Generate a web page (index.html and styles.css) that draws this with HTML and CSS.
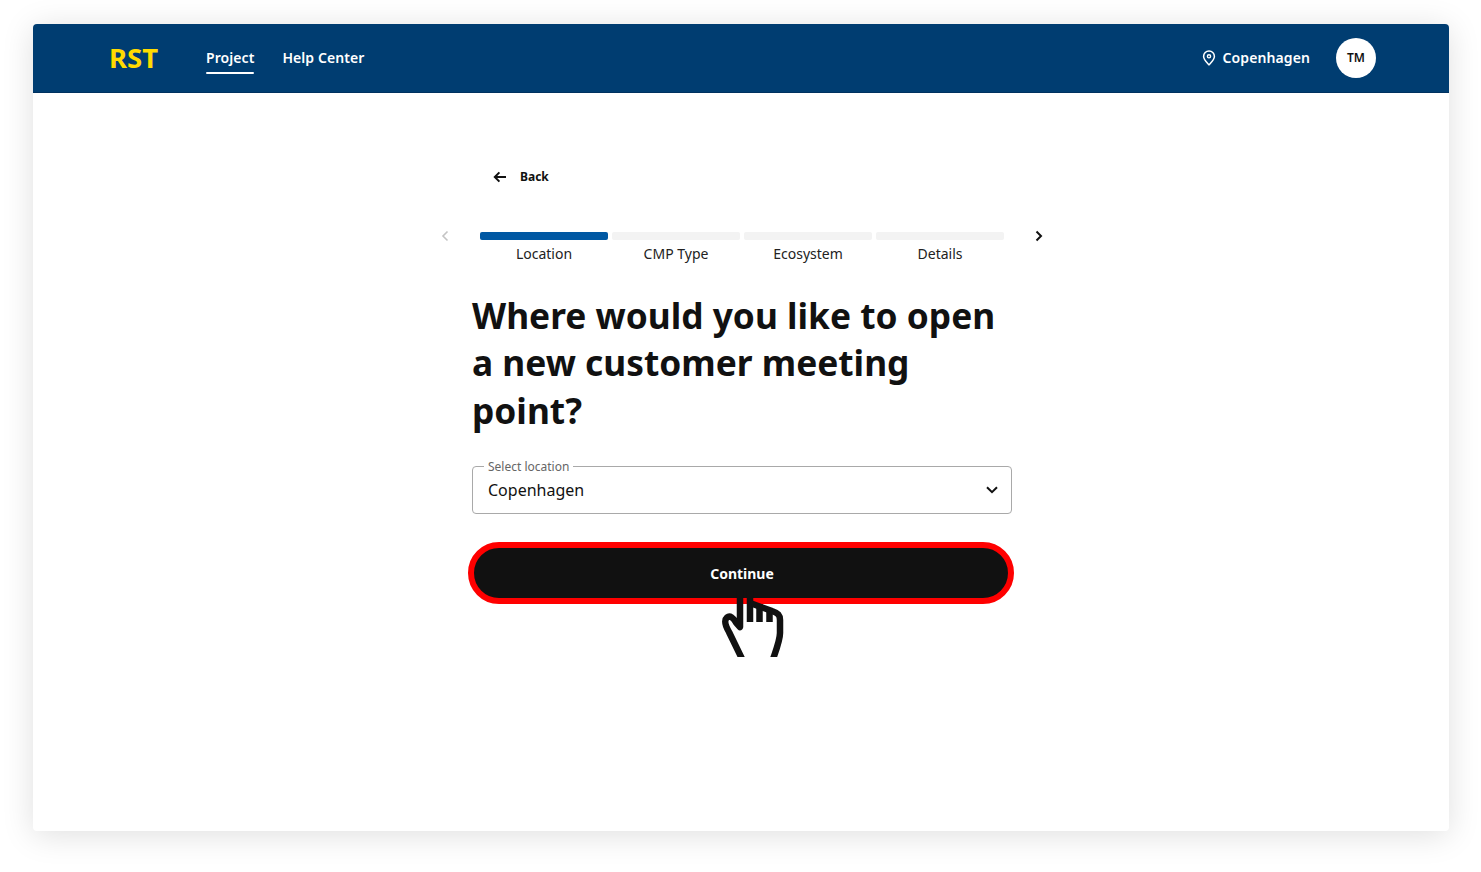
FILE: index.html
```html
<!DOCTYPE html>
<html lang="en">
<head>
<meta charset="utf-8">
<title>RST</title>
<link rel="stylesheet" href="styles.css">
</head>
<body>
<div class="window">
  <header class="topbar">
    <div class="logo">RST</div>
    <nav class="nav">
      <a class="nav-link active">Project</a>
      <a class="nav-link">Help Center</a>
    </nav>
    <div class="topbar-right">
      <div class="place">
        <svg class="pin" viewBox="0 0 14 16" width="14" height="16" aria-hidden="true"><path d="M7 14.800C4.600 12.200 1.600 9.400 1.600 6.400a5.400 5.400 0 0 1 10.800 0c0 3-3 5.800-5.400 8.400z" fill="none" stroke="#fff" stroke-width="1.500"/><circle cx="7" cy="6.300" r="1.600" fill="none" stroke="#fff" stroke-width="1.400"/></svg>
        <span>Copenhagen</span>
      </div>
      <div class="avatar">TM</div>
    </div>
  </header>
  <main class="content">
    <div class="column">
      <a class="back">
        <svg viewBox="0 0 14 12" width="14" height="12" aria-hidden="true"><path d="M13 6H2M6.400 1.400 1.800 6l4.600 4.600" fill="none" stroke="#111" stroke-width="2"/></svg>
        <span>Back</span>
      </a>
      <div class="stepper">
        <svg class="arrow" viewBox="0 0 24 24" width="24" height="24" aria-hidden="true"><path d="M14.500 7.500 10 12l4.500 4.500" fill="none" stroke="#c4c4c4" stroke-width="1.600"/></svg>
        <ol class="steps">
          <li class="step current"><span class="bar"></span><span class="label">Location</span></li>
          <li class="step"><span class="bar"></span><span class="label">CMP Type</span></li>
          <li class="step"><span class="bar"></span><span class="label">Ecosystem</span></li>
          <li class="step"><span class="bar"></span><span class="label">Details</span></li>
        </ol>
        <svg class="arrow" viewBox="0 0 24 24" width="24" height="24" aria-hidden="true"><path d="M9.500 7.500 14 12l-4.500 4.500" fill="none" stroke="#111" stroke-width="2"/></svg>
      </div>
      <h1 class="title">Where would you like to open a new customer meeting point?</h1>
      <fieldset class="select">
        <legend class="select-label">Select location</legend>
        <div class="select-row">
          <span class="select-value">Copenhagen</span>
          <svg viewBox="0 0 14 10" width="14" height="10" aria-hidden="true"><path d="M2 2.200 7 7.200l5-5" fill="none" stroke="#111" stroke-width="2"/></svg>
        </div>
      </fieldset>
      <div class="action">
        <button class="continue" type="button">Continue</button>
        <svg class="hand" viewBox="715 590 75 67.500" width="75" height="67.500" aria-hidden="true">
          <path d="M745 665 729 632C725 625 724 620 727 617.500 730 615 733.500 618 736 622.500L740 627V590" fill="none" stroke="#111" stroke-width="6.500" stroke-linejoin="round"/>
          <path d="M750 590V622M759.500 604V622M769.500 608V622" fill="none" stroke="#111" stroke-width="6.500"/>
          <path d="M750 603 772 611C778 613 780 615 780 620V633C780 641 776 650 771 665" fill="none" stroke="#111" stroke-width="6.500"/>
        </svg>
      </div>
    </div>
  </main>
</div>
</body>
</html>
```
FILE: styles.css
```css
* { box-sizing: border-box; }
html, body { margin: 0; height: 100%; }
body {
  padding: 24px 32px 41px 33px;
  background: #fff;
  font-family: "Noto Sans", "Open Sans", sans-serif;
  color: #111;
}
.window {
  height: 807px;
  background: #fff;
  border-radius: 4px;
  box-shadow: 0 4px 32px rgba(0, 0, 0, 0.13);
  overflow: hidden;
}
.topbar {
  display: flex;
  align-items: center;
  height: 69px;
  padding: 0 73px 0 77px;
  background: #003d71;
  color: #fff;
  border-bottom: 1px solid #00315f;
}
.logo {
  width: 97px;
  margin: -2px 0 0 -1px;
  font-size: 27.500px;
  font-weight: 700;
  color: #ffdb00;
}
.nav { display: flex; gap: 28px; align-self: stretch; }
.nav-link {
  position: relative;
  display: flex;
  align-items: center;
  font-size: 14px;
  font-weight: 600;
  letter-spacing: 0.07px;
  padding-bottom: 2px;
}
.nav-link.active::after {
  content: "";
  position: absolute;
  left: 0;
  right: 0;
  top: 47.500px;
  height: 2.500px;
  border-radius: 2px;
  background: #fff;
}
.topbar-right { display: flex; align-items: center; margin-left: auto; gap: 26px; }
.place { display: flex; align-items: center; gap: 7px; padding-bottom: 1px; font-size: 14px; font-weight: 600; letter-spacing: 0.1px; }
.avatar {
  display: flex;
  align-items: center;
  justify-content: center;
  width: 40px;
  height: 40px;
  padding-bottom: 1px;
  border-radius: 50%;
  background: #fff;
  color: #111;
  font-size: 12px;
  font-weight: 600;
}
.content { display: flex; justify-content: center; padding: 74.500px 0 0 2px; }
.column { display: flex; flex-direction: column; width: 540px; }
.back {
  display: flex;
  align-items: center;
  gap: 13px;
  height: 18px;
  padding-left: 21px;
  font-size: 12px;
  font-weight: 700;
}
.stepper {
  display: flex;
  gap: 23px;
  margin: 46.500px -39px 0;
  align-items: flex-start;
}
.arrow { flex: none; margin-top: -8px; }
.steps { display: flex; gap: 4px; width: 524px; margin: 0; padding: 0; list-style: none; }
.step { display: flex; flex-direction: column; align-items: center; width: 128px; font-size: 14px; }
.bar { width: 100%; height: 8px; border-radius: 2px; background: #f3f3f3; }
.current .bar { background: #0058a3; }
.label { margin-top: 3.500px; line-height: 20px; color: #222; }
.title {
  margin: 28px 0 0;
  font-size: 35.300px;
  line-height: 47.500px;
  font-weight: 700;
  color: #111;
}
.select {
  margin: 24.500px 0 0;
  padding: 0 12px 0 15px;
  height: 55.500px;
  border: 1px solid #a9a9a9;
  border-radius: 4px;
  min-width: 0;
}
.select-label {
  padding: 0 4px;
  margin-left: -4px;
  font-size: 12px;
  line-height: 16px;
  color: #666;
}
.select-row { display: flex; align-items: center; justify-content: space-between; height: 30px; margin-top: 0; }
.select-value { font-size: 16px; color: #111; }
.action { position: relative; margin-top: 27.500px; }
.continue {
  display: block;
  width: 546px;
  height: 62.500px;
  margin-left: -4px;
  padding: 2px 6px 0 8px;
  border: 6px solid #f00;
  border-radius: 32px;
  background: #111;
  color: #fff;
  font-family: inherit;
  font-size: 14px;
  font-weight: 700;
}
.hand { position: absolute; left: 243px; top: 48px; }
```
